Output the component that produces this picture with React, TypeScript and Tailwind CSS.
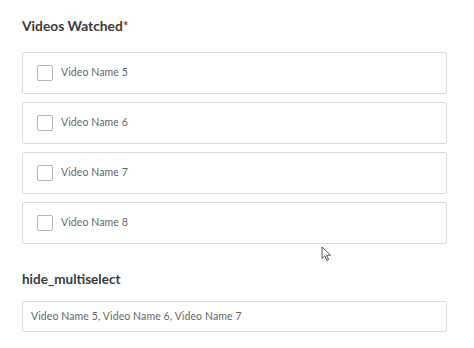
const videos = ['Video Name 5', 'Video Name 6', 'Video Name 7', 'Video Name 8']

export default function App() {
  return (
    <div className="relative h-[348px] w-[474px] bg-white pl-[22px] pr-[27px] pt-[16px] font-['Lato',sans-serif]">
      {/* Videos Watched */}
      <h2 className="text-[13.8px] font-bold leading-[20px] text-[#3a3a3a]">
        Videos Watched<span className="text-[#c0392b]">*</span>
      </h2>
      <div className="mt-[16px] flex flex-col gap-[8px]">
        {videos.map((name) => (
          <label
            key={name}
            className="flex h-[42px] items-center gap-[8px] rounded-[2px] border border-[#dcdcdc] px-[14px]"
          >
            <span className="h-[16px] w-[16px] rounded-[2px] border-[1.5px] border-[#b5b5b5] bg-white" />
            <span className="text-[10.5px] tracking-[0.1px] text-[#666]">{name}</span>
          </label>
        ))}
      </div>

      {/* hide_multiselect */}
      <h2 className="mt-[25px] text-[13.5px] font-bold leading-[20px] text-[#3a3a3a]">hide_multiselect</h2>
      <div className="mt-[12px] flex h-[31px] items-center rounded-[2px] border border-[#dcdcdc] px-[8px] text-[10.5px] tracking-[0.1px] text-[#666]">
        Video Name 5, Video Name 6, Video Name 7
      </div>

      {/* mouse cursor */}
      <svg className="absolute left-[321px] top-[246px]" width="12" height="16" viewBox="0 0 12 16">
        <path
          d="M1 1 L1 12.5 L3.8 9.8 L5.8 14.5 L7.6 13.7 L5.7 9.2 L9.5 9.2 Z"
          fill="white"
          stroke="#555"
          strokeWidth="1"
          strokeLinejoin="round"
        />
      </svg>
    </div>
  )
}
